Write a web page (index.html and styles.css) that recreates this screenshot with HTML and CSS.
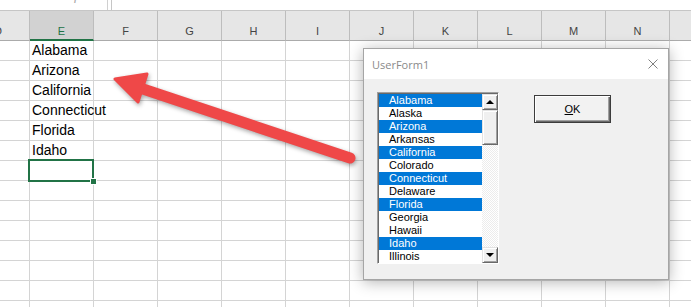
FILE: index.html
```html
<!DOCTYPE html>
<html lang="en">
  <head>
    <meta charset="UTF-8" />
    <meta name="viewport" content="width=device-width, initial-scale=1.0" />
    <title>ListBox multi-select to worksheet</title>
    <link rel="stylesheet" href="styles.css">
  </head>
  <body>
    <div class="formula-bar">
      <div class="fx-tools">
        <span class="fx-icon">✕</span>
        <span class="fx-icon">✓</span>
        <span class="fx-icon fx-italic">fx</span>
      </div>
      <div class="fx-input"></div>
    </div>

    <div class="sheet">
      <div class="col-heads">
        <div class="col-head partial">D</div>
        <div class="col-head active">E</div>
        <div class="col-head">F</div>
        <div class="col-head">G</div>
        <div class="col-head">H</div>
        <div class="col-head">I</div>
        <div class="col-head">J</div>
        <div class="col-head">K</div>
        <div class="col-head">L</div>
        <div class="col-head">M</div>
        <div class="col-head">N</div>
        <div class="col-head">O</div>
      </div>
      <div class="cells">
        <div class="col-e">
          <div class="cell">Alabama</div>
          <div class="cell">Arizona</div>
          <div class="cell">California</div>
          <div class="cell">Connecticut</div>
          <div class="cell">Florida</div>
          <div class="cell">Idaho</div>
          <div class="cell selected"></div>
        </div>
      </div>
    </div>

    <!-- the VBA form sits over the sheet like a window -->
    <div class="userform">
      <div class="uf-title">
        <span class="uf-caption">UserForm1</span>
        <svg class="uf-close" width="10" height="10" viewBox="0 0 10 10">
          <path d="M0.5 0.5 L9.5 9.5 M9.5 0.5 L0.5 9.5" stroke="#808080" stroke-width="1" fill="none" />
        </svg>
      </div>
      <div class="uf-body">
        <div class="listbox">
          <div class="lb-items">
            <div class="lb-item on">Alabama</div>
            <div class="lb-item">Alaska</div>
            <div class="lb-item on">Arizona</div>
            <div class="lb-item">Arkansas</div>
            <div class="lb-item on">California</div>
            <div class="lb-item">Colorado</div>
            <div class="lb-item on">Connecticut</div>
            <div class="lb-item">Delaware</div>
            <div class="lb-item on">Florida</div>
            <div class="lb-item">Georgia</div>
            <div class="lb-item">Hawaii</div>
            <div class="lb-item on">Idaho</div>
            <div class="lb-item">Illinois</div>
          </div>
          <div class="lb-scroll">
            <div class="sb-btn"><span class="tri-up"></span></div>
            <div class="sb-thumb"></div>
            <div class="sb-track"></div>
            <div class="sb-btn"><span class="tri-down"></span></div>
          </div>
        </div>
        <button class="ok-btn"><span class="accel">O</span>K</button>
      </div>
    </div>

    <svg class="arrow" width="691" height="307" viewBox="0 0 691 307">
      <line x1="350" y1="158" x2="140" y2="88" stroke="#ef4848" stroke-width="11" stroke-linecap="round" />
      <polygon points="115,79 147,74 138,102" fill="#ef4848" stroke="#ef4848" stroke-width="3" stroke-linejoin="round" />
    </svg>
  </body>
</html>
```

FILE: styles.css
```css
body {
  margin: 0;
  width: 691px;
  height: 307px;
  overflow: hidden;
  position: relative;
  background: #fff;
  font-family: "Liberation Sans", Arial, sans-serif;
}

/* formula bar, mostly scrolled off the top */
.formula-bar {
  display: flex;
  height: 10px;
  border-bottom: 1px solid #c6c6c6;
  overflow: hidden;
}
.fx-tools {
  width: 108px;
  display: flex;
  gap: 18px;
  padding-left: 14px;
  box-sizing: border-box;
  border-right: 1px solid #d0d0d0;
}
.fx-icon {
  font-size: 14px;
  line-height: 14px;
  margin-top: -11px;
  color: #a8a8a8;
}
.fx-italic {
  font-family: "Liberation Serif", serif;
  font-style: italic;
}
.fx-input {
  flex: 1;
  margin-left: 3px;
  border-left: 1px solid #c6c6c6;
}

/* sheet */
.sheet {
  width: 691px;
  overflow: hidden;
}
.col-heads {
  display: flex;
  height: 30px;
  overflow: hidden;
}
.col-head {
  flex: none;
  width: 64px;
  height: 30px;
  box-sizing: border-box;
  padding-top: 14px;
  line-height: 13px;
  font-size: 11px;
  text-align: center;
  color: #444;
  background: #e6e6e6;
  border-right: 1px solid #bdbdbd;
  border-bottom: 1px solid #ababab;
}
.col-head.partial {
  width: 30px;
  text-align: left;
  text-indent: -6px;
  overflow: hidden;
}
.col-head.active {
  background: #d2d2d2;
  color: #217346;
  border-bottom: 2px solid #217346;
}
.cells {
  height: 266px;
  background-image:
    linear-gradient(to right, transparent 63px, #d4d4d4 63px),
    linear-gradient(to bottom, transparent 19px, #d4d4d4 19px);
  background-size: 64px 20px;
  background-position: 30px 0;
}
.col-e {
  width: 63px;
  margin-left: 30px;
}
.cell {
  height: 20px;
  box-sizing: border-box;
  padding-left: 2px;
  font-size: 14px;
  line-height: 19px;
  color: #000;
  white-space: nowrap;
}
.cell.selected {
  position: relative;
}
.cell.selected::before {
  content: "";
  position: absolute;
  top: -2px;
  left: -2px;
  right: -1px;
  bottom: -1px;
  border: 2px solid #217346;
}
.cell.selected::after {
  content: "";
  position: absolute;
  right: -4px;
  bottom: -4px;
  width: 5px;
  height: 5px;
  background: #217346;
  border: 1px solid #fff;
}

/* UserForm window */
.userform {
  position: absolute;
  left: 363px;
  top: 48px;
  width: 306px;
  height: 232px;
  box-sizing: border-box;
  border: 1px solid #a5a5a5;
  background: #f0f0f0;
  box-shadow: 0 2px 14px rgba(0, 0, 0, 0.3);
  display: flex;
  flex-direction: column;
}
.uf-title {
  height: 30px;
  background: #fff;
  display: flex;
  align-items: center;
  justify-content: space-between;
  padding: 0 10px 0 8px;
}
.uf-caption {
  font-family: "Open Sans", sans-serif;
  font-size: 11px;
  color: #8a8a8a;
}
.uf-body {
  display: flex;
  align-items: flex-start;
  padding: 13px 0 0 13px;
}
.listbox {
  display: flex;
  height: 172px;
  box-sizing: border-box;
  background: #fff;
  border: 1px solid;
  border-color: #a0a0a0 #fff #fff #a0a0a0;
  box-shadow: inset 1px 1px 0 #696969;
  padding: 1px 0 0 1px;
}
.lb-items {
  width: 103px;
}
.lb-item {
  height: 13px;
  line-height: 13px;
  font-size: 11px;
  padding-left: 10px;
  color: #000;
  white-space: nowrap;
}
.lb-item.on {
  background: #0078d7;
  color: #fff;
}
.lb-scroll {
  width: 16px;
  display: flex;
  flex-direction: column;
}
.sb-btn,
.sb-thumb {
  box-sizing: border-box;
  background: #f0f0f0;
  border: 1px solid;
  border-color: #e3e3e3 #696969 #696969 #e3e3e3;
  box-shadow: inset 1px 1px 0 #fff, inset -1px -1px 0 #a0a0a0;
}
.sb-btn {
  height: 16px;
  display: flex;
  align-items: center;
  justify-content: center;
}
.sb-thumb {
  height: 35px;
}
.sb-track {
  flex: 1;
  background: repeating-conic-gradient(#ececec 0 25%, #fff 0 50%) 0 0 / 2px 2px;
}
.tri-up,
.tri-down {
  width: 0;
  height: 0;
  border-left: 4px solid transparent;
  border-right: 4px solid transparent;
}
.tri-up {
  border-bottom: 4px solid #000;
}
.tri-down {
  border-top: 4px solid #000;
}
.ok-btn {
  width: 77px;
  height: 28px;
  margin: 3px 0 0 35px;
  padding: 0;
  font-family: "Liberation Sans", Arial, sans-serif;
  font-size: 11px;
  color: #000;
  background: #f2f2f2;
  border: 1px solid #3c3c3c;
  box-shadow: inset 1px 1px 0 #fff, inset -1px -1px 0 #696969, inset -2px -2px 0 #a0a0a0;
}
.accel {
  text-decoration: underline;
}

/* callout arrow drawn over the screenshot */
.arrow {
  position: absolute;
  left: 0;
  top: 0;
  pointer-events: none;
  filter: drop-shadow(1px 2px 2px rgba(0, 0, 0, 0.35));
}
```
